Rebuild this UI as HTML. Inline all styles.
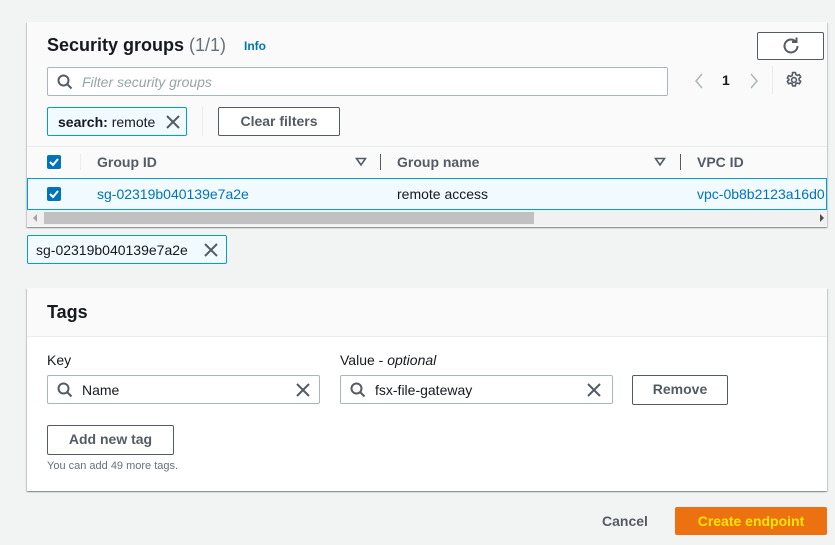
<!DOCTYPE html>
<html><head><meta charset="utf-8"><style>
*{box-sizing:border-box;margin:0;padding:0}
body{width:835px;height:545px;background:#f2f3f3;font-family:"Liberation Sans",Arial,sans-serif;color:#16191f;position:relative;overflow:hidden;font-size:14px}
.abs{position:absolute}
.card{position:absolute;left:27px;width:800px;background:#fff;box-shadow:0 1px 1px rgba(0,28,36,.3),1px 1px 1px rgba(0,28,36,.15),-1px 1px 1px rgba(0,28,36,.15)}
.inp{position:absolute;border:1px solid #aab7b8;border-radius:2px;background:#fff;height:29px}
.btn{position:absolute;border:1px solid #545b64;border-radius:2px;background:#fff;font-weight:bold;color:#545b64;text-align:center;font-size:14px;line-height:26px}
.cb{position:absolute;width:14px;height:14px;background:#0073bb;border-radius:2px}
.link{color:#0073bb}
.t{position:absolute;white-space:nowrap}
</style></head><body>

<div class="card" style="top:22px;height:205px;background:#fafafa">
  <div class="t" style="left:20px;top:13px;font-size:18px;font-weight:bold">Security groups <span style="font-weight:normal;color:#687078">(1/1)</span></div>
  <div class="t link" style="left:217px;top:17px;font-size:12px;font-weight:bold">Info</div>
  <div class="btn" style="left:730px;top:10px;width:67px;height:28px">
    <svg width="22" height="22" viewBox="0 0 22 22" style="margin-top:2px"><path d="M17.5 11a6.5 6.5 0 1 1-2.2-4.9" fill="none" stroke="#545b64" stroke-width="2"/><path d="M16.5 2.5v4.5h-4.5" fill="none" stroke="#545b64" stroke-width="2"/></svg>
  </div>
  <div class="inp" style="left:20px;top:45px;width:621px">
    <svg class="abs" style="left:9px;top:6px" width="16" height="16" viewBox="0 0 16 16"><circle cx="6.5" cy="6.5" r="5" fill="none" stroke="#545b64" stroke-width="2"/><path d="M10 10l4.5 4.5" stroke="#545b64" stroke-width="2"/></svg>
    <div class="t" style="left:34px;top:6px;font-style:italic;color:#95a5a6">Filter security groups</div>
  </div>
  <svg class="abs" style="left:666px;top:50px" width="12" height="18"><path d="M9 2L3 9l6 7" fill="none" stroke="#aab7b8" stroke-width="1.5"/></svg>
  <div class="t" style="left:695px;top:50px;font-weight:bold">1</div>
  <svg class="abs" style="left:721px;top:50px" width="12" height="18"><path d="M3 2l6 7-6 7" fill="none" stroke="#aab7b8" stroke-width="1.5"/></svg>
  <div class="abs" style="left:745px;top:44px;width:1px;height:28px;background:#eaeded"></div>
  <svg class="abs" style="left:758px;top:49px" width="18" height="18" viewBox="0 0 18 18"><path d="M7.6 1.5h2.8l.4 2.1 1.5.8 2-.8 1.4 2.4-1.6 1.4v1.6l1.6 1.4-1.4 2.4-2-.8-1.5.8-.4 2.1H7.6l-.4-2.1-1.5-.8-2 .8-1.4-2.4 1.6-1.4V8.4L2.3 7l1.4-2.4 2 .8 1.5-.8z" fill="none" stroke="#545b64" stroke-width="1.6" stroke-linejoin="round"/><circle cx="9" cy="9" r="2.4" fill="none" stroke="#545b64" stroke-width="1.6"/></svg>
  <div class="abs" style="left:20px;top:85px;width:140px;height:29px;border:1px solid #00a1c9;background:#f1faff;border-radius:2px">
    <div class="t" style="left:10px;top:6px"><b>search:</b> remote</div>
    <svg class="abs" style="left:117px;top:6px" width="16" height="16"><path d="M2 2l12 12M14 2L2 14" stroke="#545b64" stroke-width="2"/></svg>
  </div>
  <div class="abs" style="left:175px;top:84px;width:1px;height:30px;background:#eaeded"></div>
  <div class="btn" style="left:191px;top:85px;width:122px;height:29px">Clear filters</div>
  <div class="abs" style="left:0;top:124px;width:800px;height:1px;background:#eaeded"></div>
  <div class="cb" style="left:20px;top:133px"><svg width="14" height="14"><path d="M3 7l3 3 5-6" fill="none" stroke="#fff" stroke-width="2"/></svg></div>
  <div class="abs" style="left:53px;top:132px;width:1px;height:16px;background:#eaeded"></div>
  <div class="t" style="left:70px;top:132px;font-weight:bold;color:#545b64">Group ID</div>
  <svg class="abs" style="left:328px;top:135px" width="12" height="10"><path d="M1.5 1.5h9L6 8z" fill="none" stroke="#545b64" stroke-width="1.6"/></svg>
  <div class="abs" style="left:353px;top:132px;width:1px;height:16px;background:#545b64"></div>
  <div class="t" style="left:370px;top:132px;font-weight:bold;color:#545b64">Group name</div>
  <svg class="abs" style="left:627px;top:135px" width="12" height="10"><path d="M1.5 1.5h9L6 8z" fill="none" stroke="#545b64" stroke-width="1.6"/></svg>
  <div class="abs" style="left:653px;top:132px;width:1px;height:16px;background:#545b64"></div>
  <div class="t" style="left:670px;top:132px;font-weight:bold;color:#545b64">VPC ID</div>
  <div class="abs" style="left:0;top:156px;width:800px;height:32px;background:#f1faff;border:1px solid #00a1c9;overflow:hidden">
    <div class="cb" style="left:19px;top:8px"><svg width="14" height="14"><path d="M3 7l3 3 5-6" fill="none" stroke="#fff" stroke-width="2"/></svg></div>
    <div class="t link" style="left:69px;top:7px">sg-02319b040139e7a2e</div>
    <div class="t" style="left:369px;top:7px">remote access</div>
    <div class="t link" style="left:669px;top:7px">vpc-0b8b2123a16d0</div>
  </div>
  <div class="abs" style="left:0;top:188px;width:800px;height:16px;background:#f1f1f1">
    <div class="abs" style="left:6px;top:4px;width:0;height:0;border:4px solid transparent;border-right-color:#a3a3a3;border-left:0"></div>
    <div class="abs" style="left:17px;top:2px;width:490px;height:12px;background:#c1c1c1"></div>
    <div class="abs" style="left:793px;top:4px;width:0;height:0;border:4px solid transparent;border-left-color:#505050;border-right:0"></div>
  </div>
</div>

<div class="abs" style="left:27px;top:235px;width:200px;height:29px;border:1px solid #00a1c9;background:#f1faff;border-radius:2px">
  <div class="t" style="left:8px;top:6px">sg-02319b040139e7a2e</div>
  <svg class="abs" style="left:175px;top:6px" width="16" height="16"><path d="M2 2l12 12M14 2L2 14" stroke="#545b64" stroke-width="2"/></svg>
</div>

<div class="card" style="top:288px;height:203px">
  <div class="abs" style="left:0;top:0;width:800px;height:49px;background:#fafafa;border-bottom:1px solid #eaeded"></div>
  <div class="t" style="left:20px;top:14px;font-size:18px;font-weight:bold">Tags</div>
  <div class="t" style="left:20px;top:64px">Key</div>
  <div class="t" style="left:313px;top:64px">Value - <i>optional</i></div>
  <div class="inp" style="left:20px;top:87px;width:273px">
    <svg class="abs" style="left:9px;top:6px" width="16" height="16" viewBox="0 0 16 16"><circle cx="6.5" cy="6.5" r="5" fill="none" stroke="#545b64" stroke-width="2"/><path d="M10 10l4.5 4.5" stroke="#545b64" stroke-width="2"/></svg>
    <div class="t" style="left:34px;top:6px">Name</div>
    <svg class="abs" style="left:247px;top:6px" width="16" height="16"><path d="M2 2l12 12M14 2L2 14" stroke="#545b64" stroke-width="2"/></svg>
  </div>
  <div class="inp" style="left:313px;top:87px;width:273px">
    <svg class="abs" style="left:9px;top:6px" width="16" height="16" viewBox="0 0 16 16"><circle cx="6.5" cy="6.5" r="5" fill="none" stroke="#545b64" stroke-width="2"/><path d="M10 10l4.5 4.5" stroke="#545b64" stroke-width="2"/></svg>
    <div class="t" style="left:34px;top:6px">fsx-file-gateway</div>
    <svg class="abs" style="left:245px;top:6px" width="16" height="16"><path d="M2 2l12 12M14 2L2 14" stroke="#545b64" stroke-width="2"/></svg>
  </div>
  <div class="btn" style="left:605px;top:87px;width:96px;height:30px">Remove</div>
  <div class="btn" style="left:20px;top:137px;width:127px;height:30px">Add new tag</div>
  <div class="t" style="left:20px;top:172px;font-size:11px;color:#687078">You can add 49 more tags.</div>
</div>

<div class="t" style="left:602px;top:513px;font-weight:bold;color:#545b64">Cancel</div>
<div class="abs" style="left:675px;top:507px;width:152px;height:28px;background:#ec7211;border-radius:2px;color:#ffe600;font-weight:bold;text-align:center;line-height:28px">Create endpoint</div>
</body></html>
